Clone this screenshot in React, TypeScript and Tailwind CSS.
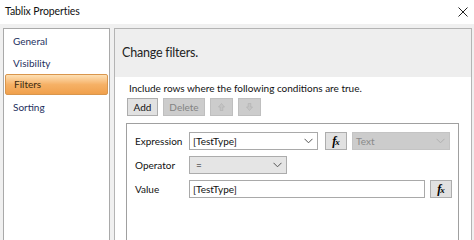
import React from "react";

const Chevron = ({ color = "#555" }: { color?: string }) => (
  <svg width="9" height="6" viewBox="0 0 9 6" className="shrink-0">
    <path d="M0.5 0.8 L4.5 4.8 L8.5 0.8" fill="none" stroke={color} strokeWidth="1" />
  </svg>
);

const Fx = () => (
  <button className="w-[22px] h-[18px] bg-[#e1e1e1] border border-[#adadad] flex items-center justify-center text-[12px] font-bold italic text-black leading-none" style={{ fontFamily: '"Liberation Serif", serif' }}>
    <span>f</span><span className="text-[9px] -ml-[1px] mt-[3px]">x</span>
  </button>
);

const Arrow = ({ up }: { up: boolean }) => (
  <svg width="7" height="8" viewBox="0 0 7 8" style={{ transform: up ? "none" : "rotate(180deg)" }}>
    <path d="M3.5 0.5 L6.5 4 L4.8 4 L4.8 7.5 L2.2 7.5 L2.2 4 L0.5 4 Z" fill="#c4c4c4" stroke="#b0b0b0" strokeWidth="0.6" />
  </svg>
);

export default function App() {
  const font = { fontFamily: 'Lato, "Noto Sans", sans-serif' };
  return (
    <div className="w-[474px] h-[240px] bg-[#f0f0f0] overflow-hidden flex flex-col" style={font}>
      <div className="h-[24px] bg-white flex items-center justify-between pl-[5px] pr-[6px] shrink-0">
        <span className="text-[10.5px] text-[#111] tracking-[-0.1px]">Tablix Properties</span>
        <svg width="10" height="10" viewBox="0 0 10 10">
          <path d="M0.5 0.5 L9.5 9.5 M9.5 0.5 L0.5 9.5" stroke="#222" strokeWidth="1" />
        </svg>
      </div>
      <div className="flex-1 flex pl-[3px] pt-[4px] gap-[4px] min-h-0">
        <div className="w-[107px] shrink-0 bg-white border border-[#a9a9a9] border-b-0 flex flex-col pt-[1px] px-[1px] text-[10px] text-[#24305e]">
          <div className="h-[22px] shrink-0 flex items-center pl-[8px]">General</div>
          <div className="h-[22px] shrink-0 flex items-center pl-[8px]">Visibility</div>
          <div className="h-[21px] shrink-0 flex items-center pl-[8px] border border-[#d9964d] rounded-[2px] bg-gradient-to-b from-[#fde0b4] via-[#f6b166] to-[#f0a04c] text-[#3a2a10]">Filters</div>
          <div className="h-[22px] shrink-0 flex items-center pl-[8px] mt-[1px]">Sorting</div>
        </div>
        <div className="w-[358px] shrink-0 bg-white border border-[#b4b4b4] border-b-0 flex flex-col overflow-hidden">
          <div className="h-[48px] shrink-0 bg-[#eeeeee] flex items-center pl-[7px] text-[12.5px] tracking-[-0.2px] text-[#222]">Change filters.</div>
          <div className="flex flex-col pl-[11px] pr-[12px] pt-[4px] shrink-0">
            <div className="h-[14px] shrink-0 flex items-center pl-[3px] text-[10px] text-[#111]">Include rows where the following conditions are true.</div>
            <div className="flex gap-[5px] mt-[3px] ml-[1px] text-[10px] shrink-0">
              <button className="w-[31px] h-[18px] bg-[#e1e1e1] border border-[#adadad] text-[#111] flex items-center justify-center">Add</button>
              <button className="w-[42px] h-[18px] bg-[#cccccc] border border-[#bfbfbf] text-[#838383] flex items-center justify-center">Delete</button>
              <button className="w-[23px] h-[18px] bg-[#cccccc] border border-[#bfbfbf] flex items-center justify-center"><Arrow up /></button>
              <button className="w-[23px] h-[18px] bg-[#cccccc] border border-[#bfbfbf] flex items-center justify-center"><Arrow up={false} /></button>
            </div>
            <div className="mt-[7px] h-[130px] shrink-0 border border-[#a0a0a0] pl-[8px] pt-[8px] flex flex-col gap-[5px] text-[10px] text-[#111]">
              <div className="flex items-center h-[18px] shrink-0">
                <span className="w-[54px]">Expression</span>
                <div className="w-[129px] h-[18px] border border-[#a9a9a9] bg-white flex items-center justify-between pl-[3px] pr-[4px]">
                  <span>[TestType]</span><Chevron />
                </div>
                <div className="ml-[7px]"><Fx /></div>
                <div className="ml-[5px] w-[98px] h-[18px] bg-[#cccccc] border border-[#c4c4c4] flex items-center justify-between pl-[3px] pr-[4px] text-[#8a8a8a]">
                  <span>Text</span><Chevron color="#b0b0b0" />
                </div>
              </div>
              <div className="flex items-center h-[18px] mt-[1px] shrink-0">
                <span className="w-[54px]">Operator</span>
                <div className="w-[98px] h-[18px] border border-[#acacac] bg-[#e5e5e5] flex items-center justify-between pl-[6px] pr-[4px]">
                  <span>=</span><Chevron />
                </div>
              </div>
              <div className="flex items-center h-[18px] mt-[1px] shrink-0">
                <span className="w-[54px]">Value</span>
                <div className="w-[236px] h-[18px] border border-[#a9a9a9] bg-white flex items-center pl-[3px]">
                  <span>[TestType]</span>
                </div>
                <div className="ml-[5px]"><Fx /></div>
              </div>
            </div>
          </div>
        </div>
      </div>
    </div>
  );
}
